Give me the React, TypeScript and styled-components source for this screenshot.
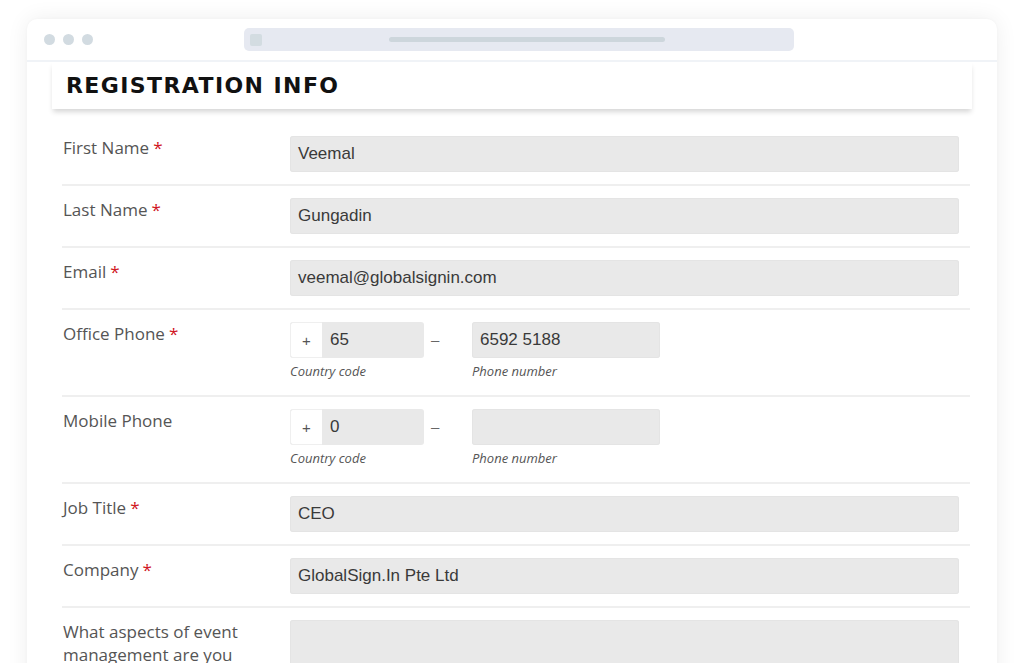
import React from "react";
import styled, { createGlobalStyle } from "styled-components";

const Global = createGlobalStyle`
  html, body { margin: 0; padding: 0; background: #ffffff; }
  body { height: 663px; overflow: hidden; font-family: "Open Sans", "Liberation Sans", sans-serif; }
  * { box-sizing: border-box; }
`;

const Stage = styled.div`
  padding: 19px 27px 0 27px;
  height: 663px;
  overflow: hidden;
`;

const Window = styled.div`
  background: #ffffff;
  border-radius: 10px 10px 0 0;
  box-shadow: 0 0 22px rgba(0, 0, 0, 0.07), 0 0 3px rgba(0, 0, 0, 0.03);
  height: 700px;
`;

const TitleBar = styled.div`
  height: 43px;
  border-bottom: 2px solid #f0f3f7;
  display: flex;
  align-items: center;
  padding-left: 17px;
`;

const Dots = styled.div`
  display: flex;
  gap: 8px;
`;

const Dot = styled.span`
  width: 11px;
  height: 11px;
  border-radius: 50%;
  background: #d2dbe1;
`;

const AddressBar = styled.div`
  margin-left: 151px;
  width: 550px;
  height: 23px;
  border-radius: 5px;
  background: #e6e9f1;
  display: flex;
  align-items: center;
  padding-left: 6px;
`;

const AddrSquare = styled.span`
  width: 12px;
  height: 12px;
  border-radius: 2px;
  background: #d3dce1;
`;

const AddrLine = styled.span`
  margin-left: 127px;
  width: 276px;
  height: 5px;
  border-radius: 3px;
  background: #cdd6dc;
`;

const Panel = styled.div`
  margin: 0 25px;
`;

const Heading = styled.div`
  height: 47px;
  padding-left: 14px;
  display: flex;
  align-items: flex-end;
  padding-bottom: 12px;
  background: #fff;
  box-shadow: 0 4px 5px -1px rgba(0, 0, 0, 0.16);
  h1 {
    margin: 0;
    font-family: "DejaVu Sans", "Liberation Sans", sans-serif;
    font-weight: 700;
    font-size: 22px;
    letter-spacing: 1.4px;
    color: #111;
    line-height: 1;
  }
`;

const Form = styled.div`
  padding: 16px 2px 0 10px;
`;

const Row = styled.div<{ $first?: boolean; $tall?: boolean }>`
  display: flex;
  align-items: flex-start;
  border-top: ${(p) => (p.$first ? "none" : "2px solid #efefef")};
  padding: ${(p) => (p.$first ? "11px 11px 12px 1px" : p.$tall ? "12px 11px 16px 1px" : "12px 11px 12px 1px")};
`;

const Label = styled.div`
  width: 227px;
  flex: none;
  padding-right: 40px;
  font-size: 17px;
  line-height: 23px;
  color: #555;
`;

const Star = styled.span`
  color: #d0141e;
  margin-left: 4px;
`;

const Field = styled.div`
  flex: 1;
  height: 36px;
  border-radius: 3px;
  background: #e9e9e9;
  box-shadow: inset 0 0 0 1px #e4e4e4;
  display: flex;
  align-items: center;
  padding-left: 8px;
  font-family: "Liberation Sans", Arial, sans-serif;
  font-size: 17px;
  color: #3a3a3a;
`;

const TextArea = styled(Field)`
  height: 80px;
`;

const PhoneWrap = styled.div`
  display: flex;
  align-items: flex-start;
`;

const PhoneCol = styled.div`
  display: flex;
  flex-direction: column;
`;

const CodeBox = styled.div`
  width: 134px;
  height: 36px;
  display: flex;
  border-radius: 3px;
  overflow: hidden;
  background: #e9e9e9;
  font-family: "Liberation Sans", Arial, sans-serif;
  font-size: 17px;
  color: #3a3a3a;
`;

const Plus = styled.span`
  width: 32px;
  flex: none;
  background: #fff;
  border: 1px solid #efefef;
  border-right: none;
  border-radius: 3px 0 0 3px;
  display: flex;
  align-items: center;
  justify-content: center;
  color: #555;
  font-size: 15px;
`;

const CodeValue = styled.span`
  display: flex;
  align-items: center;
  padding-left: 8px;
`;

const Dash = styled.span`
  width: 48px;
  text-align: left;
  padding-left: 7px;
  line-height: 36px;
  font-family: "Liberation Sans", Arial, sans-serif;
  color: #666;
  font-size: 15px;
`;

const NumberBox = styled(Field)`
  flex: none;
  width: 188px;
`;

const Caption = styled.span`
  font-size: 13px;
  font-style: italic;
  color: #555;
  margin-top: 5px;
  line-height: 16px;
`;

type Req = { label: string; value: string; required?: boolean };

const Phone = ({ code, num }: { code: string; num: string }) => (
  <PhoneWrap>
    <PhoneCol>
      <CodeBox>
        <Plus>+</Plus>
        <CodeValue>{code}</CodeValue>
      </CodeBox>
      <Caption>Country code</Caption>
    </PhoneCol>
    <Dash>–</Dash>
    <PhoneCol>
      <NumberBox>{num}</NumberBox>
      <Caption>Phone number</Caption>
    </PhoneCol>
  </PhoneWrap>
);

const TextRow = ({ label, value, required, first }: Req & { first?: boolean }) => (
  <Row $first={first}>
    <Label>
      {label}
      {required && <Star>*</Star>}
    </Label>
    <Field>{value}</Field>
  </Row>
);

export default function App() {
  return (
    <>
      <Global />
      <Stage>
        <Window>
          <TitleBar>
            <Dots>
              <Dot />
              <Dot />
              <Dot />
            </Dots>
            <AddressBar>
              <AddrSquare />
              <AddrLine />
            </AddressBar>
          </TitleBar>
          <Panel>
            <Heading>
              <h1>REGISTRATION INFO</h1>
            </Heading>
            <Form>
              <TextRow first label="First Name" value="Veemal" required />
              <TextRow label="Last Name" value="Gungadin" required />
              <TextRow label="Email" value="veemal@globalsignin.com" required />
              <Row $tall>
                <Label>
                  Office Phone<Star>*</Star>
                </Label>
                <Phone code="65" num="6592 5188" />
              </Row>
              <Row $tall>
                <Label>Mobile Phone</Label>
                <Phone code="0" num="" />
              </Row>
              <TextRow label="Job Title" value="CEO" required />
              <TextRow label="Company" value="GlobalSign.In Pte Ltd" required />
              <Row>
                <Label>What aspects of event management are you interested in?</Label>
                <TextArea />
              </Row>
            </Form>
          </Panel>
        </Window>
      </Stage>
    </>
  );
}
